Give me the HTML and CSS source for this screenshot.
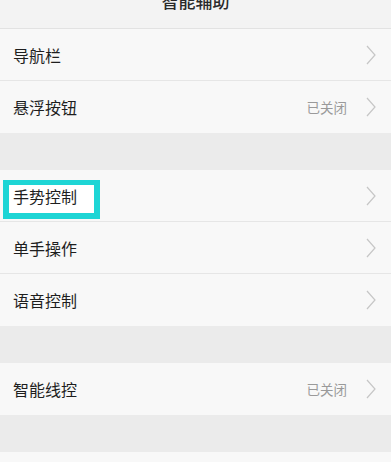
FILE: index.html
```html
<!DOCTYPE html>
<html lang="zh-CN">
<head>
<meta charset="utf-8">
<title>智能辅助</title>
<link rel="stylesheet" href="styles.css">
</head>
<body>
<div class="page">
  <header class="header"><span class="title">智能辅助</span></header>

  <section class="group">
    <div class="row"><span class="label">导航栏</span><span class="right"><svg class="chev" viewBox="0 0 10 20"><polyline points="1,1 9,10 1,19"/></svg></span></div>
    <div class="row"><span class="label">悬浮按钮</span><span class="right"><span class="value">已关闭</span><svg class="chev" viewBox="0 0 10 20"><polyline points="1,1 9,10 1,19"/></svg></span></div>
  </section>

  <div class="gap"></div>

  <section class="group">
    <div class="row highlighted"><span class="mark"></span><span class="label">手势控制</span><span class="right"><svg class="chev" viewBox="0 0 10 20"><polyline points="1,1 9,10 1,19"/></svg></span></div>
    <div class="row"><span class="label">单手操作</span><span class="right"><svg class="chev" viewBox="0 0 10 20"><polyline points="1,1 9,10 1,19"/></svg></span></div>
    <div class="row"><span class="label">语音控制</span><span class="right"><svg class="chev" viewBox="0 0 10 20"><polyline points="1,1 9,10 1,19"/></svg></span></div>
  </section>

  <div class="gap"></div>

  <section class="group">
    <div class="row"><span class="label">智能线控</span><span class="right"><span class="value">已关闭</span><svg class="chev" viewBox="0 0 10 20"><polyline points="1,1 9,10 1,19"/></svg></span></div>
  </section>

  <div class="gap"></div>

  <section class="group">
    <div class="row"></div>
  </section>
</div>
</body>
</html>
```

FILE: styles.css
```css
html, body {
  margin: 0;
  padding: 0;
  background: #ebebeb;
}
body {
  font-family: "Noto Sans CJK SC", "Noto Sans", sans-serif;
  color: #1e1e1e;
  overflow: hidden;
}
.page {
  width: 391px;
  display: flex;
  flex-direction: column;
}
.header {
  height: 29px;
  box-sizing: border-box;
  background: #f3f3f3;
  border-bottom: 1px solid #e2e2e2;
  display: flex;
  justify-content: center;
  align-items: flex-start;
  overflow: hidden;
}
.title {
  font-size: 17px;
  line-height: 22px;
  margin-top: -10px;
  font-weight: 500;
  color: #2a2a2a;
}
.group {
  background: #f8f8f8;
  display: flex;
  flex-direction: column;
}
.row {
  position: relative;
  height: 52px;
  box-sizing: border-box;
  border-bottom: 1px solid #e6e6e6;
  display: flex;
  align-items: center;
  justify-content: space-between;
  padding: 0 15px 0 13px;
}
.row:last-child {
  border-bottom: none;
}
.label {
  position: relative;
  z-index: 1;
  font-size: 16px;
  line-height: 20px;
}
.right {
  display: flex;
  align-items: center;
  gap: 19px;
}
.value {
  font-size: 13.5px;
  color: #9a9a9a;
}
.chev {
  width: 10px;
  height: 20px;
  fill: none;
  stroke: #c6c6c6;
  stroke-width: 1.2;
}
.gap {
  height: 37px;
  background: #ebebeb;
}
.mark {
  position: absolute;
  left: 3px;
  top: 10px;
  width: 97px;
  height: 39px;
  box-sizing: border-box;
  border: 6px solid #1ed5d5;
  border-top-width: 5px;
  background: #ffffff;
}
```
